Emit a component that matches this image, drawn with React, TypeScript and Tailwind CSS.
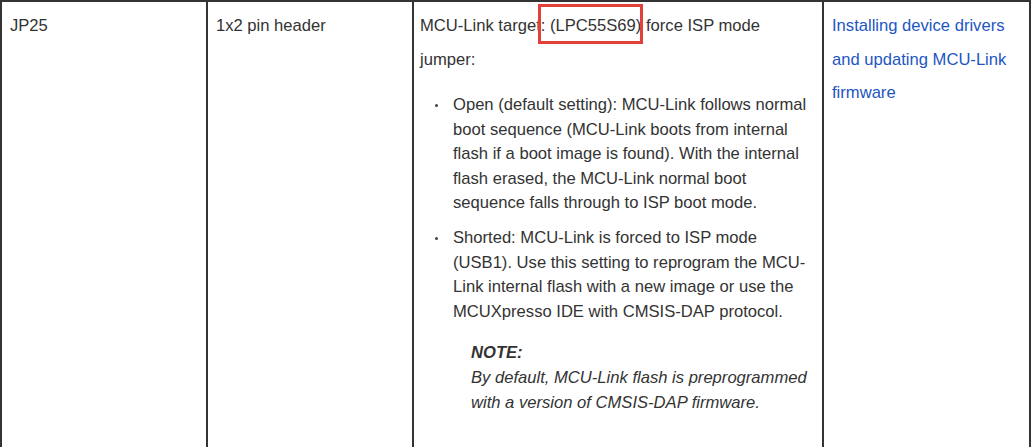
const font = { fontFamily: '"Liberation Sans", Arial, sans-serif' };

function Highlight({ children }: { children: React.ReactNode }) {
  return (
    <span className="relative">
      {children}
      <span className="pointer-events-none absolute -left-[12px] -right-[2px] -top-[12px] -bottom-[9px] border-[3px] border-[#e2403a]" />
    </span>
  );
}

function Bullet() {
  return <span className="absolute -left-[18px] top-[11px] h-[3px] w-[3px] rounded-full bg-[#444]" />;
}

export default function App() {
  return (
    <div className="h-[447px] overflow-hidden bg-white text-[16.6px] text-[#333]" style={font}>
      <table className="w-[1029px] table-fixed border-collapse">
        <colgroup>
          <col className="w-[206px]" />
          <col className="w-[206px]" />
          <col className="w-[410px]" />
          <col className="w-[207px]" />
        </colgroup>
        <tbody>
          <tr className="align-top">
            <td className="h-[480px] border-2 border-[#333] px-2 pt-[7px] leading-[33.5px]">JP25</td>
            <td className="border-2 border-[#333] px-2 pt-[7px] leading-[33.5px]">1x2 pin header</td>
            <td className="border-2 border-[#333] pl-[6px] pr-2 pt-[7px]">
              <p className="leading-[33.5px]">
                MCU-Link target: <Highlight>(LPC55S69)</Highlight> force ISP mode jumper:
              </p>
              <ul className="mt-[17px] space-y-[10px] pl-[33px] pr-1 leading-[24.6px]">
                <li className="relative">
                  <Bullet />
                  Open (default setting): MCU-Link follows normal boot sequence (MCU-Link boots from internal flash if a boot image is found). With the internal flash erased, the MCU-Link normal boot sequence falls through to ISP boot mode.
                </li>
                <li className="relative">
                  <Bullet />
                  Shorted: MCU-Link is forced to ISP mode (USB1). Use this setting to reprogram the MCU-Link internal flash with a new image or use the MCUXpresso IDE with CMSIS-DAP protocol.
                </li>
              </ul>
              <div className="mt-[17px] pl-[51px] italic leading-[24.6px]">
                <div className="font-bold">NOTE:</div>
                <div>By default, MCU-Link flash is preprogrammed with a version of CMSIS-DAP firmware.</div>
              </div>
            </td>
            <td className="border-2 border-[#333] px-2 pt-[7px] leading-[33.5px]">
              <a className="text-[#1d56c2]" href="#">Installing device drivers and updating MCU-Link firmware</a>
            </td>
          </tr>
        </tbody>
      </table>
    </div>
  );
}
